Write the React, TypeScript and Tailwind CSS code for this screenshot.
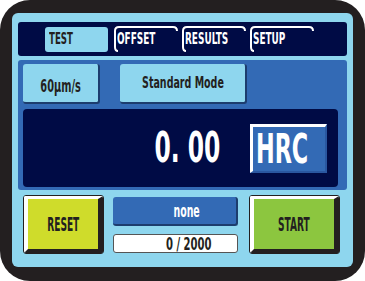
const font = { fontFamily: '"Liberation Sans Narrow", "DejaVu Sans Condensed", "Liberation Sans", sans-serif' };

const Tab = ({ label, active }: { label: string; active?: boolean }) => {
  if (active) {
    return (
      <div className="flex h-[25px] w-[63px] items-center rounded-[3px] bg-[#8ed6ee] pl-[4px] text-[16px] font-bold text-[#231f20]">
        <span className="inline-block origin-left scale-x-[0.6]">{label}</span>
      </div>
    );
  }
  return (
    <div className="relative flex h-[26px] w-[66px] items-center pl-[4px] text-[16px] font-bold text-white">
      <svg className="absolute left-0 top-0" width="66" height="26" viewBox="0 0 66 26" fill="none">
        <path d="M64 5 Q64 1 60 1 H6 Q2 1 2 5 V21 Q2 25 5 25" stroke="white" strokeWidth="2" />
      </svg>
      <span className="inline-block origin-left scale-x-[0.62]">{label}</span>
    </div>
  );
};

export default function App() {
  return (
    <div className="h-[281px] w-[365px] bg-white" style={font}>
      <div className="h-full w-full rounded-[30px] bg-[#231f20] pl-[12px] pr-[12px] pt-[13px]">
        <div className="flex h-[254px] flex-col rounded-[6px] bg-[#8ed6ee] pl-[6px] pr-[6px] pt-[9px]">
          {/* tabs */}
          <div className="flex h-[34px] items-center gap-[2px] rounded-[3px] bg-[#000b45] pl-[27px]">
            <Tab label="TEST" active />
            <div className="w-[1px]" />
            <Tab label="OFFSET" />
            <Tab label="RESULTS" />
            <Tab label="SETUP" />
          </div>

          {/* main panel */}
          <div className="mt-[4px] flex h-[130px] flex-col rounded-[3px] bg-[#336ab5] pl-[5px] pr-[9px] pt-[4px]">
            <div className="flex h-[40px] gap-[20px]">
              <div className="flex w-[77px] items-end justify-center rounded-[3px] border-b-2 border-r-2 border-[#1d3d6e] bg-[#8ed6ee] pb-[3px] text-[17px] font-bold text-[#231f20]">
                <span className="inline-block scale-x-[0.64]">60µm/s</span>
              </div>
              <div className="flex w-[127px] items-center justify-center rounded-[3px] border-b-2 border-r-2 border-[#1d3d6e] bg-[#8ed6ee] text-[16px] font-bold text-[#231f20]">
                <span className="inline-block scale-x-[0.66]">Standard Mode</span>
              </div>
            </div>
            <div className="mt-[5px] flex h-[78px] items-center justify-end rounded-[4px] bg-[#000b45] pr-[11px]">
              <span className="mr-[30px] inline-block origin-right scale-x-[0.62] text-[42px] font-bold leading-none text-white">0. 00</span>
              <div className="flex h-[49px] w-[77px] items-center border-l-[3px] border-t-[3px] border-b-2 border-r-2 border-l-white border-t-white border-b-[#2a57a0] border-r-[#2a57a0] bg-[#336ab5] pl-[3px]">
                <span className="inline-block origin-left scale-x-[0.62] text-[40px] font-bold leading-none text-white">HRC</span>
              </div>
            </div>
          </div>

          {/* bottom row */}
          <div className="mt-[5px] flex h-[59px] pl-[5px]">
            <div className="w-[81px] rounded-[3px] border border-[#231f20]">
              <div className="flex h-full items-center justify-center rounded-[2px] border-b-[4px] border-l-[4px] border-r-[5px] border-t-[3px] border-b-[#231f20] border-l-white border-r-[#231f20] border-t-white bg-[#cfdc2b] text-[19px] font-bold text-[#231f20]">
                <span className="inline-block scale-x-[0.53]">RESET</span>
              </div>
            </div>
            <div className="ml-[9px] flex w-[125px] flex-col pt-[2px]">
              <div className="flex h-[29px] items-center justify-center rounded-[3px] border-b-2 border-r-2 border-[#1d3d6e] bg-[#336ab5] pl-[24px] text-[18px] font-bold text-white">
                <span className="inline-block scale-x-[0.58]">none</span>
              </div>
              <div className="mt-[8px] flex h-[19px] items-center justify-center rounded-[3px] border border-[#555] bg-white pl-[27px] text-[18px] font-bold text-[#231f20]">
                <span className="inline-block scale-x-[0.62]">0 / 2000</span>
              </div>
            </div>
            <div className="ml-[11px] w-[91px] rounded-[3px] border border-[#231f20]">
              <div className="flex h-full items-center justify-center rounded-[2px] border-b-[4px] border-l-[4px] border-r-[5px] border-t-[3px] border-b-[#231f20] border-l-white border-r-[#231f20] border-t-white bg-[#8cc63f] text-[19px] font-bold text-[#231f20]">
                <span className="inline-block scale-x-[0.53]">START</span>
              </div>
            </div>
          </div>
        </div>
      </div>
    </div>
  );
}
